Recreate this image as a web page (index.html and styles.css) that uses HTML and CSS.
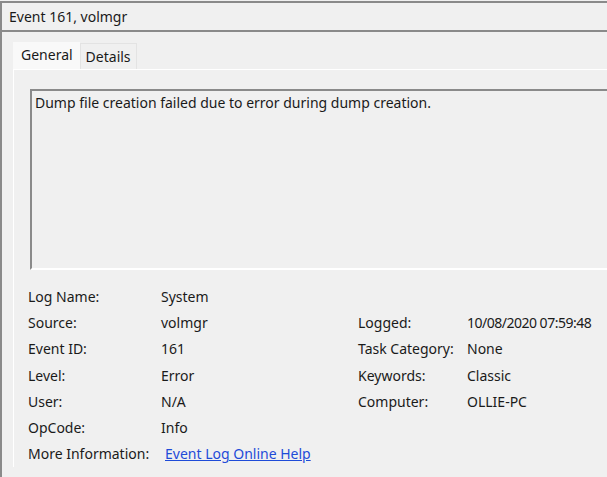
FILE: index.html
```html
<!DOCTYPE html>
<html lang="en">
<head>
    <meta charset="UTF-8">
    <title>Event 161, volmgr</title>
    <link rel="stylesheet" href="styles.css">
</head>
<body>
    <div class="window">
        <div class="title">Event 161, volmgr</div>

        <div class="content">
            <div class="tabs">
                <div class="tab active">General</div>
                <div class="tab">Details</div>
            </div>

            <div class="panel">
                <div class="description">Dump file creation failed due to error during dump creation.</div>

                <div class="fields">
                    <span class="label">Log Name:</span>
                    <span class="value">System</span>
                    <span></span>
                    <span></span>

                    <span class="label">Source:</span>
                    <span class="value">volmgr</span>
                    <span class="label">Logged:</span>
                    <span class="value date">10/08/2020 07:59:48</span>

                    <span class="label">Event ID:</span>
                    <span class="value">161</span>
                    <span class="label">Task Category:</span>
                    <span class="value">None</span>

                    <span class="label">Level:</span>
                    <span class="value">Error</span>
                    <span class="label">Keywords:</span>
                    <span class="value">Classic</span>

                    <span class="label">User:</span>
                    <span class="value">N/A</span>
                    <span class="label">Computer:</span>
                    <span class="value">OLLIE-PC</span>

                    <span class="label">OpCode:</span>
                    <span class="value">Info</span>
                    <span></span>
                    <span></span>

                    <span class="label">More Information:</span>
                    <span class="value"><a href="#">Event Log Online Help</a></span>
                    <span></span>
                    <span></span>
                </div>
            </div>
        </div>
    </div>
</body>
</html>
```

FILE: styles.css
```css
body {
    margin: 0;
    background-color: #f0f0f0;
    font-family: "Noto Sans", Arial, sans-serif;
    font-size: 14px;
    color: #1a1a1a;
    overflow: hidden;
}

.window {
    margin-top: 1px;
    height: 476px;
    border-top: 2px solid #8a8a8a;
    border-left: 2px solid #8a8a8a;
    box-sizing: border-box;
}

.title {
    height: 27px;
    line-height: 27px;
    padding-left: 7px;
    border-bottom: 2px solid #8a8a8a;
}

.content {
    padding: 10px 0 0 11px;
}

.tabs {
    display: flex;
    align-items: flex-end;
    height: 27px;
}

.tab {
    height: 25px;
    line-height: 25px;
    padding: 0 5px;
    background-color: #f0f0f0;
    border: 1px solid #e3e3e3;
    border-bottom: none;
}

.tab.active {
    height: 27px;
    line-height: 26px;
    padding: 0 7px 0 8px;
    background-color: #f9f9f9;
    border: none;
}

.panel {
    border-top: 1px solid #ffffff;
    border-left: 1px solid #ffffff;
    padding: 19px 0 0 16px;
}

.description {
    height: 175px;
    border-top: 2px solid #8a8a8a;
    border-left: 2px solid #8a8a8a;
    border-bottom: 2px solid #ffffff;
    padding: 2px 0 0 3px;
}

.fields {
    display: grid;
    grid-template-columns: 133px 197px 109px auto;
    grid-auto-rows: 26.3px;
    align-items: center;
    margin: 13px 0 0 -2px;
}

.date {
    letter-spacing: -0.5px;
}

.value a {
    margin-left: 4px;
    color: #1e4bd8;
}
```
